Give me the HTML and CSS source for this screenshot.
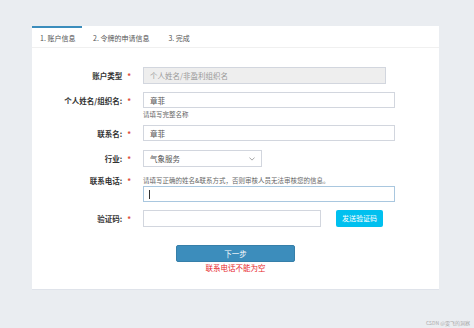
FILE: index.html
```html
<!DOCTYPE html>
<html>
<head>
<meta charset="utf-8">
<link rel="stylesheet" href="styles.css">
</head>
<body>
<div class="page">
  <div class="card">
    <div class="tabs">
      <div class="tab active">1. 账户信息</div>
      <div class="tab">2. 令牌的申请信息</div>
      <div class="tab">3. 完成</div>
    </div>
    <div class="form">
      <div class="row r1">
        <div class="label">账户类型<span class="star">*</span></div>
        <div class="ctrl"><div class="input disabled w-a">个人姓名/非盈利组织名</div></div>
      </div>
      <div class="row r2">
        <div class="label">个人姓名/组织名:<span class="star">*</span></div>
        <div class="ctrl">
          <div class="input w-b">章菲</div>
          <div class="hint">请填写完整名称</div>
        </div>
      </div>
      <div class="row r3">
        <div class="label">联系名:<span class="star">*</span></div>
        <div class="ctrl"><div class="input w-b">章菲</div></div>
      </div>
      <div class="row r4">
        <div class="label">行业:<span class="star">*</span></div>
        <div class="ctrl"><div class="input select w-c">气象服务
          <svg class="chev" viewBox="0 0 8 5" width="6" height="4"><path d="M0.5 0.5 L4 4 L7.5 0.5" fill="none" stroke="#888" stroke-width="1"/></svg>
        </div></div>
      </div>
      <div class="row r5">
        <div class="label">联系电话:<span class="star">*</span></div>
        <div class="ctrl">
          <div class="hint top">请填写正确的姓名&amp;联系方式，否则审核人员无法审核您的信息。</div>
          <div class="input focus w-b"><span class="caret"></span></div>
        </div>
      </div>
      <div class="row r6">
        <div class="label">验证码:<span class="star">*</span></div>
        <div class="ctrl code">
          <div class="input w-d"></div>
          <div class="btn-info">发送验证码</div>
        </div>
      </div>
      <div class="actions">
        <div class="btn-primary">下一步</div>
        <div class="error">联系电话不能为空</div>
      </div>
    </div>
  </div>
  <div class="watermark">CSDN @雯飞的洞察</div>
</div>
</body>
</html>
```
FILE: styles.css
```css
* { box-sizing: border-box; }
html, body { margin: 0; padding: 0; }
body {
  background: #eaedf1;
  font-family: "Noto Sans CJK SC", "Noto Sans", "Liberation Sans", sans-serif;
  font-size: 8px;
  color: #333;
  width: 474px;
  height: 328px;
  overflow: hidden;
}
.page {
  position: relative;
  height: 328px;
  padding: 26px 0 0 32px;
}
.card {
  width: 407px;
  height: 264px;
  background: #fff;
  border-bottom: 1px solid #dfe3ea;
}
.tabs {
  display: flex;
  height: 22px;
  border-bottom: 1px solid #f0f0f0;
}
.tab {
  white-space: nowrap;
  line-height: 21px;
  color: #555;
  font-size: 7px;
  border-top: 2px solid transparent;
}
.tab:nth-child(1) { padding: 0 9px 0 8px; width: 50px; }
.tab.active { border-top-color: #3c8dbc; }
.tab:nth-child(2) { padding: 0 10px 0 11px; }
.tab:nth-child(3) { padding: 0 10px 0 9px; }
.form {
  padding-top: 19px;
}
.row {
  display: flex;
  align-items: flex-start;
}
.label {
  width: 99px;
  text-align: right;
  font-weight: bold;
  color: #333;
  font-size: 7.5px;
  line-height: 17px;
  white-space: nowrap;
}
.star {
  color: #dd4b39;
  margin-left: 5px;
}
.ctrl {
  margin-left: 12px;
}
.input {
  height: 17px;
  border: 1px solid #d2d6de;
  padding: 0 6px;
  line-height: 15px;
  font-size: 7.5px;
  color: #555;
  position: relative;
}
.disabled { background: #eee; color: #999; }
.w-a { width: 243px; }
.w-b { width: 252px; height: 16px; }
.w-c { width: 119px; }
.w-d { width: 178px; }
.select { display: flex; align-items: center; justify-content: space-between; }
.focus { border-color: #a9c7df; }
.caret {
  position: absolute;
  left: 5px; top: 3px;
  width: 1px; height: 9px;
  background: #333;
}
.hint {
  font-size: 6.5px;
  color: #666;
  line-height: 9px;
  margin-top: 2px;
}
.hint.top { margin-top: 0; margin-bottom: 0; line-height: 11px; }
.r2 { margin-top: 8px; }
.r3 { margin-top: 6px; }
.r4 { margin-top: 8px; }
.r5 { margin-top: 8px; }
.r5 .label { line-height: 11px; }
.r6 { margin-top: 8px; }
.code { display: flex; align-items: center; }
.btn-info {
  margin-left: 15px;
  width: 47px;
  height: 17px;
  background: #00c0ef;
  color: #fff;
  border-radius: 2px;
  text-align: center;
  line-height: 17px;
  font-size: 7px;
  margin-top: -1px;
}
.actions {
  display: flex;
  flex-direction: column;
  align-items: center;
  margin-top: 18px;
}
.btn-primary {
  width: 119px;
  height: 17px;
  background: #3c8dbc;
  border: 1px solid #367fa9;
  border-radius: 2px;
  color: #fff;
  text-align: center;
  line-height: 15px;
  font-size: 7.5px;
}
.error {
  color: #e7282d;
  font-size: 7.5px;
  line-height: 10px;
  margin-top: 1px;
}
.watermark {
  position: absolute;
  right: 4px;
  bottom: 2px;
  font-size: 5px;
  color: #aaa;
}
```
